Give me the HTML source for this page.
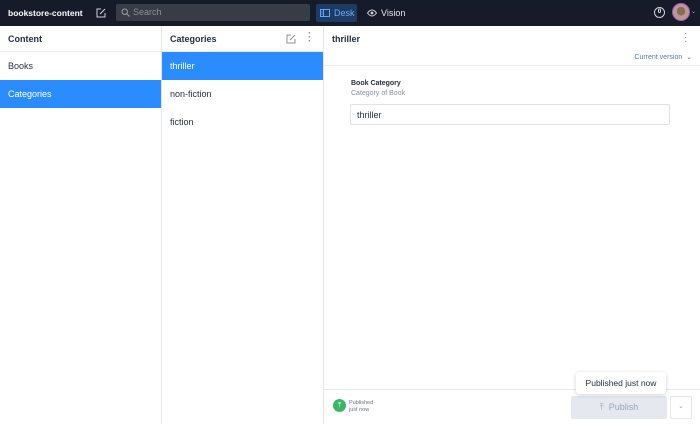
<!DOCTYPE html>
<html><head><style>
*{box-sizing:border-box;margin:0;padding:0}
body{width:700px;height:424px;overflow:hidden;font-family:"Liberation Sans",sans-serif;background:#fff;color:#262f3d;position:relative}
.top{position:absolute;left:0;top:0;width:700px;height:26px;background:#151b28}
.abs{position:absolute}
.pane{position:absolute;top:26px;bottom:0;border-right:1px solid #e4e6ea;background:#fff}
.hd{height:26px;border-bottom:1px solid #eceef1;font-size:9px;font-weight:bold;padding:8px 8px 0;position:relative}
.row{height:28px;font-size:9px;padding:9px 8px 0}
.sel{background:#2b8cff;color:#fff}
</style></head><body>
<div class="top">
 <div class="abs" style="left:8px;top:8px;color:#fff;font-size:8.5px;font-weight:bold">bookstore-content</div>
 <svg class="abs" style="left:96px;top:8px" width="10" height="10" viewBox="0 0 10 10"><path d="M5 1H1v8h8V5M4 6l5-5" stroke="#cfd3da" fill="none" stroke-width="1"/></svg>
 <div class="abs" style="left:116px;top:4px;width:194px;height:17px;background:#373d47;border-radius:2px"></div>
 <svg class="abs" style="left:121px;top:8px" width="9" height="9" viewBox="0 0 9 9"><circle cx="3.7" cy="3.7" r="2.7" stroke="#9ba1ab" fill="none"/><path d="M5.7 5.7L8.5 8.5" stroke="#9ba1ab"/></svg>
 <div class="abs" style="left:133px;top:7px;color:#8a909a;font-size:9px">Search</div>
 <div class="abs" style="left:316px;top:4px;width:41px;height:18px;background:#1d3b63;border-radius:2px"></div>
 <svg class="abs" style="left:320px;top:9px" width="10" height="8" viewBox="0 0 10 8"><rect x=".5" y=".5" width="9" height="7" stroke="#5fa5ff" fill="none"/><path d="M3.5 .5v7M1.5 3h1M1.5 5h1" stroke="#5fa5ff"/></svg>
 <div class="abs" style="left:334px;top:8px;color:#6aaeff;font-size:9px">Desk</div>
 <svg class="abs" style="left:367px;top:9px" width="10" height="8" viewBox="0 0 10 8"><path d="M.5 4Q5-2 9.5 4Q5 10 .5 4Z" stroke="#cfd3da" fill="none"/><circle cx="5" cy="4" r="1.4" fill="#cfd3da"/></svg>
 <div class="abs" style="left:381px;top:8px;color:#e4e6ea;font-size:9px">Vision</div>
 <div class="abs" style="left:654px;top:7px;width:11px;height:11px;border:1px solid #cfd3da;border-radius:50%;color:#fff;font-size:6px;text-align:center;line-height:9px;font-weight:bold">0</div>
 <div class="abs" style="left:672px;top:3px;width:18px;height:18px;border-radius:50%;background:radial-gradient(circle at 50% 45%,#8a6a5a 0 35%,#b89a90 36%);border:1.5px solid #b154c8"></div>
 <div class="abs" style="left:691px;top:8px;color:#aaa;font-size:6px">⌄</div>
</div>
<div class="pane" style="left:0;width:162px">
 <div class="hd">Content</div>
 <div class="row">Books</div>
 <div class="row sel">Categories</div>
</div>
<div class="pane" style="left:162px;width:162px">
 <div class="hd">Categories
  <svg class="abs" style="left:124px;top:8px" width="10" height="10" viewBox="0 0 10 10"><path d="M5 1H1v8h8V5M4 6l5-5" stroke="#8a909a" fill="none"/></svg>
  <div class="abs" style="left:146px;top:6px;color:#8a909a;font-size:10px;line-height:4px">·<br>·<br>·</div>
 </div>
 <div class="row sel">thriller</div>
 <div class="row">non-fiction</div>
 <div class="row">fiction</div>
</div>
<div class="abs" style="left:324px;top:26px;width:376px;height:398px">
 <div style="height:40px;border-bottom:1px solid #eceef1;position:relative">
  <div class="abs" style="left:8px;top:8px;font-size:9px;font-weight:bold">thriller</div>
  <div class="abs" style="left:360px;top:6px;color:#8a909a;font-size:10px;line-height:4px">·<br>·<br>·</div>
  <div class="abs" style="right:8px;top:27px;color:#5c7aa6;font-size:7px">Current version &nbsp;⌄</div>
 </div>
 <div class="abs" style="left:27px;top:54px;font-size:7px;font-weight:bold">Book Category</div>
 <div class="abs" style="left:27px;top:64px;font-size:7px;color:#8690a0">Category of Book</div>
 <div class="abs" style="left:26px;top:78px;width:320px;height:21px;border:1px solid #dfe2e6;border-radius:2px;font-size:9px;padding:5px 6px 0">thriller</div>
 <div class="abs" style="left:0;top:363px;width:376px;border-top:1px solid #e8eaed"></div>
 <div class="abs" style="left:9px;top:373px;width:13px;height:13px;border-radius:50%;background:#3ab667;color:#fff;font-size:7px;text-align:center;line-height:13px">⤒</div>
 <div class="abs" style="left:25px;top:374px;font-size:5.5px;color:#6b7280;line-height:7px">Published<br>just now</div>
 <div class="abs" style="left:247px;top:370px;width:96px;height:23px;background:#e5e9ef;border-radius:2px;color:#98a6bd;font-size:9px;text-align:center;line-height:23px">⤒ &nbsp;Publish</div>
 <div class="abs" style="left:346px;top:370px;width:22px;height:23px;border:1px solid #e4e6ea;border-radius:2px;color:#98a0ad;font-size:7px;text-align:center;line-height:20px">⌄</div>
 <div class="abs" style="left:252px;top:346px;width:90px;height:22px;background:#fff;border-radius:3px;box-shadow:0 1px 4px rgba(0,0,0,.18);font-size:8.5px;text-align:center;line-height:22px">Published just now</div>
</div>
</body></html>
